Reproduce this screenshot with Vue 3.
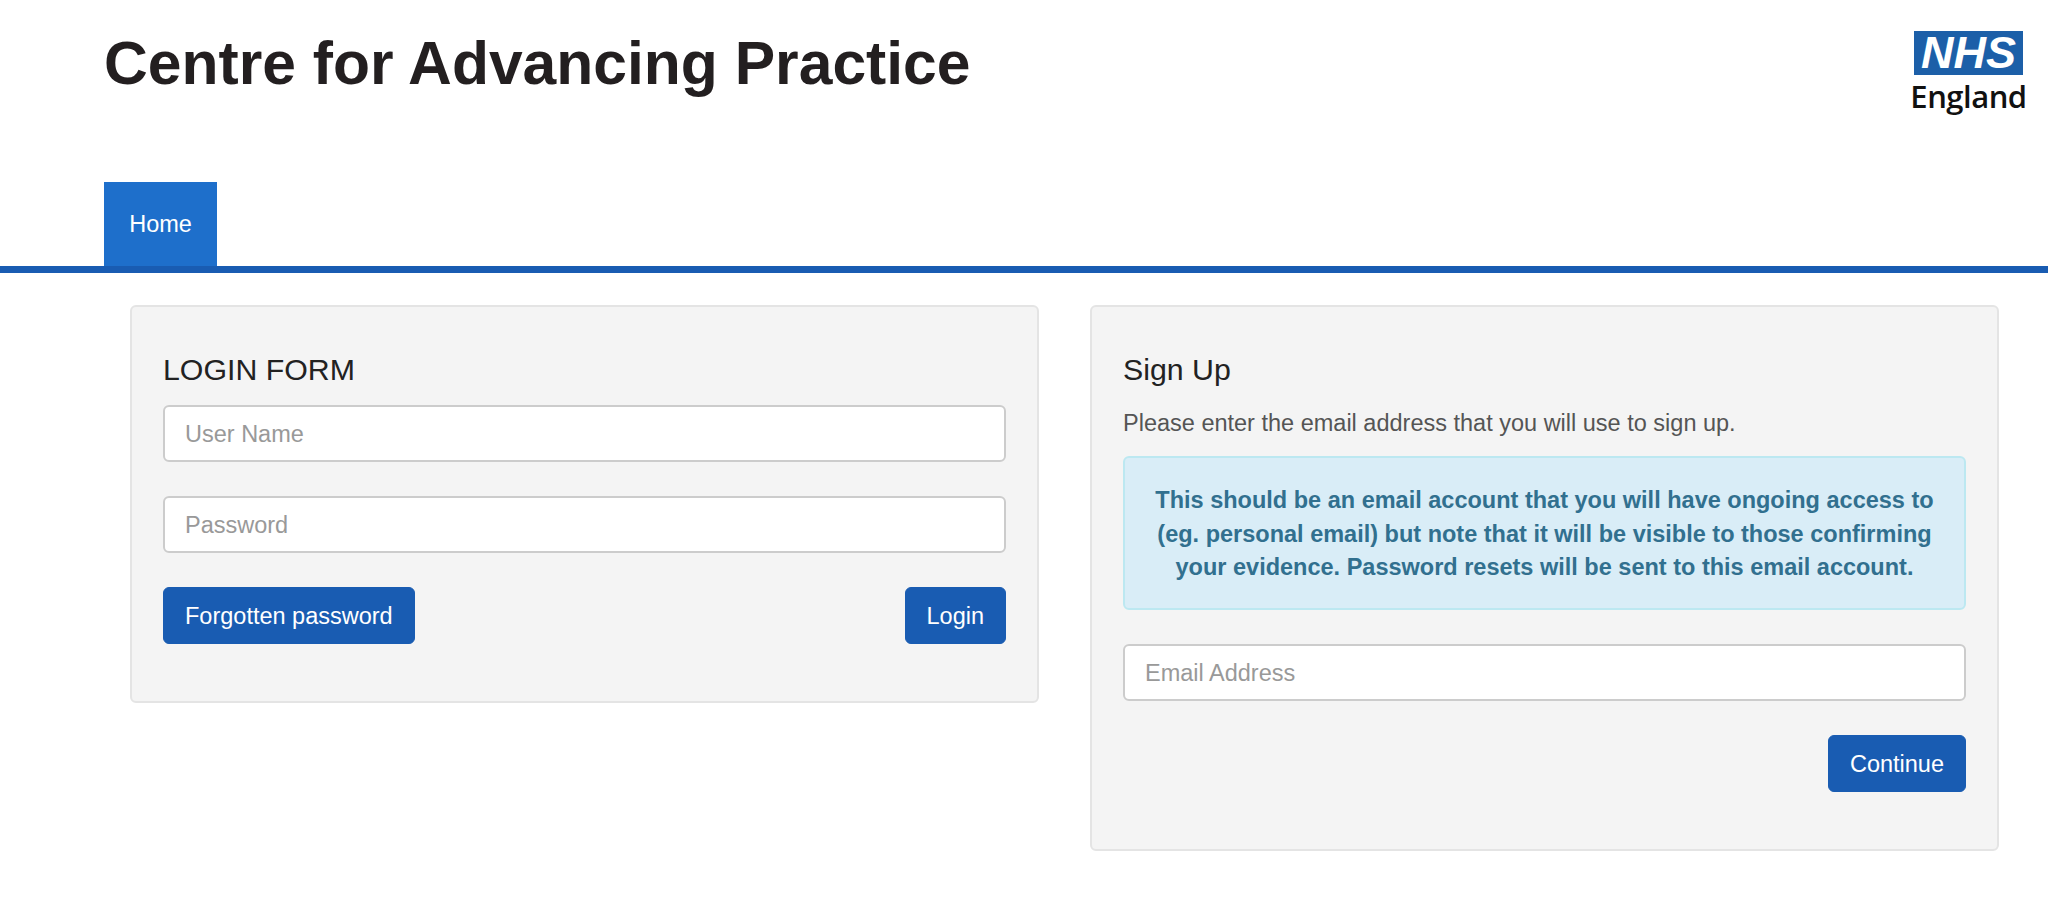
<template>
  <div class="page">
    <header class="masthead">
      <h1 class="site-title">Centre for Advancing Practice</h1>
      <div class="logo">
        <span class="logo-nhs">NHS</span>
        <span class="logo-region">England</span>
      </div>
    </header>

    <nav class="navbar">
      <a class="nav-tab" href="#">Home</a>
    </nav>

    <main class="columns">
      <section class="well well--login">
        <h2 class="well-title">LOGIN FORM</h2>
        <input class="field" type="text" placeholder="User Name" />
        <input class="field field--gap" type="password" placeholder="Password" />
        <div class="actions actions--split">
          <button class="btn" type="button">Forgotten password</button>
          <button class="btn" type="button">Login</button>
        </div>
      </section>

      <section class="well well--signup">
        <h2 class="well-title">Sign Up</h2>
        <p class="intro">Please enter the email address that you will use to sign up.</p>
        <div class="alert">
          This should be an email account that you will have ongoing access to<br />
          (eg. personal email) but note that it will be visible to those confirming<br />
          your evidence. Password resets will be sent to this email account.
        </div>
        <input class="field" type="email" placeholder="Email Address" />
        <div class="actions actions--end">
          <button class="btn" type="button">Continue</button>
        </div>
      </section>
    </main>
  </div>
</template>

<script setup>
</script>

<style>
html, body { background: #fff; }
</style>

<style scoped>
.page {
  min-height: 905px;
  overflow: hidden;
  font-family: "Liberation Sans", Arial, sans-serif;
  color: #222;
  background: #fff;
}

.masthead {
  height: 182px;
  box-sizing: border-box;
  padding: 24px 23px 0 104px;
  display: flex;
  justify-content: space-between;
  align-items: flex-start;
}
.site-title {
  margin: 0;
  font-size: 60.6px;
  line-height: 78px;
  font-weight: 700;
  color: #231f20;
}

.logo {
  margin-top: 7px;
  width: 113px;
  display: flex;
  flex-direction: column;
  align-items: center;
}
.logo-nhs {
  width: 109px;
  height: 44px;
  background: #1c5fa8;
  color: #fff;
  font-size: 45px;
  line-height: 44px;
  font-weight: 700;
  font-style: italic;
  text-align: center;
  letter-spacing: 0;
}
.logo-region {
  margin-top: 3px;
  font-family: "Open Sans", sans-serif;
  font-size: 31px;
  line-height: 36px;
  font-weight: 600;
  color: #111;
  letter-spacing: -0.5px;
}

.navbar {
  height: 84px;
  border-bottom: 7px solid #195cb2;
  display: flex;
  padding-left: 104px;
}
.nav-tab {
  width: 113px;
  background: #1e6fcb;
  color: #fff;
  font-size: 23.5px;
  line-height: 84px;
  text-align: center;
  text-decoration: none;
}

.columns {
  display: grid;
  grid-template-columns: 909px 909px;
  gap: 51px;
  padding: 32px 49px 0 130px;
  align-items: start;
}

.well {
  box-sizing: border-box;
  background: #f4f4f4;
  border: 2px solid #e4e4e4;
  border-radius: 6px;
  padding: 0 31px;
  display: flex;
  flex-direction: column;
}
.well--login { height: 398px; }
.well--signup { height: 546px; }

.well-title {
  margin: 0;
  padding-top: 46px;
  height: 98px;
  box-sizing: border-box;
  font-size: 30.3px;
  line-height: 34px;
  font-weight: 400;
  color: #222;
}
.well--signup .well-title { height: 101px; }

.intro {
  margin: 0 0 18px;
  font-size: 23.5px;
  line-height: 30px;
  color: #555;
}

.alert {
  box-sizing: border-box;
  height: 154px;
  margin-bottom: 34px;
  padding: 26px 10px 0;
  background: #d9edf7;
  border: 2px solid #bce8f1;
  border-radius: 6px;
  color: #31708f;
  font-size: 23.5px;
  line-height: 33.5px;
  font-weight: 700;
  text-align: center;
}

.field {
  display: block;
  box-sizing: border-box;
  width: 100%;
  height: 57px;
  padding: 2px 20px 0;
  background: #fff;
  border: 2px solid #ccc;
  border-radius: 6px;
  font-family: inherit;
  font-size: 23.5px;
  color: #555;
  outline: none;
}
.field::placeholder { color: #999; opacity: 1; }
.field--gap { margin-top: 34px; }

.actions {
  display: flex;
  margin-top: 34px;
}
.actions--split { justify-content: space-between; }
.actions--end { justify-content: flex-end; }

.btn {
  height: 57px;
  padding: 1px 21px 0;
  background: #195cb2;
  border: 1px solid #195cb2;
  border-radius: 6px;
  color: #fff;
  font-family: inherit;
  font-size: 23.5px;
  cursor: pointer;
}
</style>
